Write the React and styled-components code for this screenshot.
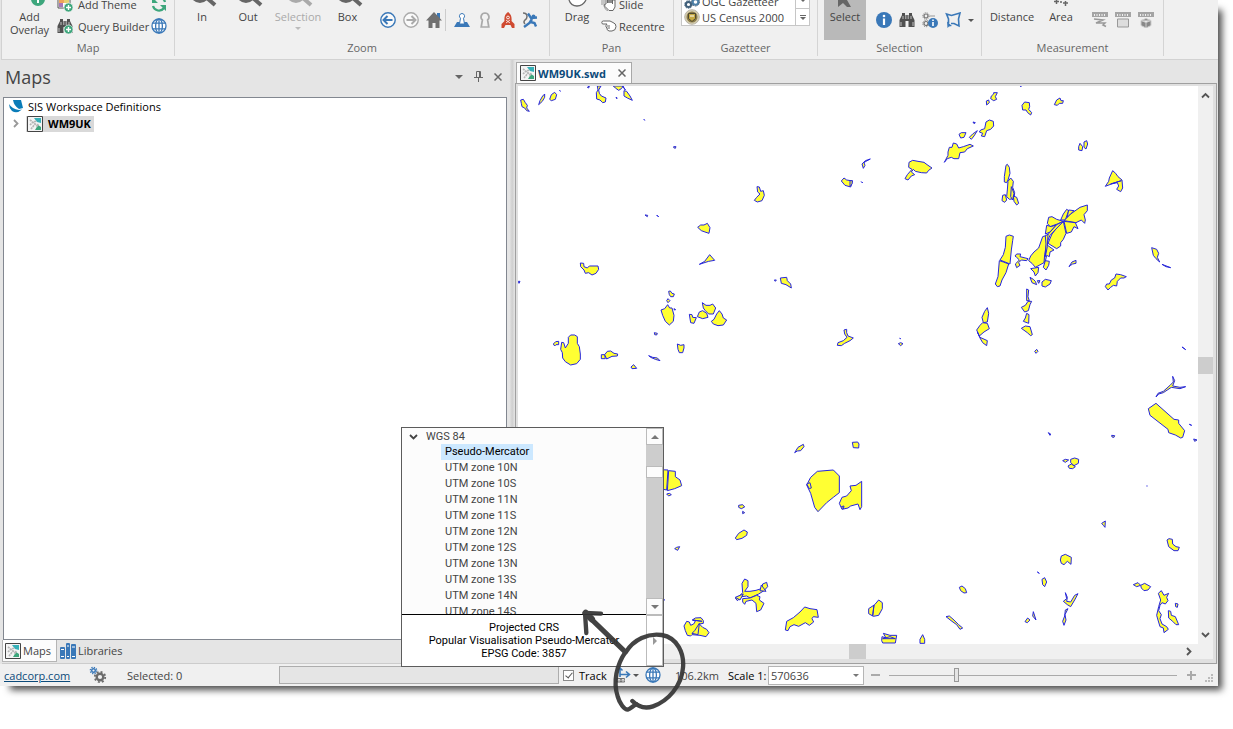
import React, { useState } from "react";
import styled, { createGlobalStyle } from "styled-components";

const crsZones = ["10N", "10S", "11N", "11S", "12N", "12S", "13N", "13S", "14N", "14S"];

// Boundary outlines, grouped by map sheet. Coordinates are in thirds of a unit.
const sheets = [
  {
    x: 510,
    y: 80,
    shapes: [
      "32,60 40,58 46,68 52,76 50,84 58,94 50,92 44,84 36,80 34,70",
      "104,42 104,52 97,64 86,74 90,62 98,48",
      "134,37 140,44 136,58 124,62 119,58 124,44",
      "149,31 151,34",
      "232,22 238,18 236,24",
      "262,18 273,18 266,30 268,40 274,48 288,54 286,66 278,68 270,60 260,57 259,38 264,30",
      "310,18 340,18 334,26 326,31 316,24",
      "342,32 350,34 360,48 367,61 352,54 342,48",
      "338,18 346,30",
      "318,52 322,54 320,56",
      "402,118 404,121",
      "491,200 498,200 496,205 491,203",
      "741,320 748,321 752,334 760,332 763,346 756,362 742,366 733,361 740,352 750,342 743,336",
      "994,303 1002,294 1010,300 1028,303 1022,321 1005,316",
      "405,405 413,406 412,410",
      "440,405 446,411",
      "563,442 572,435 582,435 592,430 600,443 597,460 585,456 574,452",
      "568,553 584,544 599,524 614,541 596,544",
      "211,549 221,550 222,560 232,564 238,558 264,558 266,568 258,580 246,585 236,578 226,580 222,570 212,560",
      "25,604 30,604 27,610",
      "793,600 799,600 796,604",
      "811,594 830,592 832,602 842,612 844,624 828,614 814,610",
      "476,634 481,633 486,640 493,642 490,650 482,650 478,644",
      "470,662 474,656 480,662 474,668",
      "473,674 479,684 486,684 492,706 490,724 478,735 466,724 458,706 453,690 464,686",
      "492,686 497,689 493,690",
      "538,703 546,704 548,712 559,713 552,730 542,728",
      "562,710 568,696 578,692 590,700 594,712 578,716",
      "577,668 588,676 600,676 608,672 617,684 610,702 596,702 586,692 580,684",
      "628,692 636,702 640,714 650,720 640,735 624,737 610,732 604,724 612,718 620,702",
      "433,758 442,760 440,765 434,764",
      "130,792 137,785 146,784 146,794 138,794 134,798",
      "175,772 182,765 194,765 202,770 202,790 208,800 211,822 211,838 200,851 182,855 166,845 158,834 157,818 152,808 155,787 161,788 166,804 175,790",
      "274,824 284,824 286,836 274,836",
      "284,824 292,814 302,813 312,820 323,822 322,828 306,829 290,837",
      "416,827 428,832 442,834 450,842 436,838 422,832",
      "502,792 512,796 522,794 522,804 518,818 508,818 504,808",
      "363,861 371,854 380,865 366,866",
      "1002,750 1010,748 1010,758 1014,768 1030,774 1020,782 1004,790 994,797 982,796 984,788 1000,782 1011,772 1004,762",
    ],
  },
  {
    x: 850,
    y: 80,
    shapes: [
      "510,18 514,19",
      "409,63 416,60 418,68 410,75",
      "424,48 431,42 431,38 442,38 436,50 440,58 431,62 422,56",
      "516,76 524,66 538,68 539,80 536,88 545,98 542,105 533,98 528,90 518,90",
      "613,74 620,60 630,54 633,62 640,62 638,70 628,70 622,76",
      "369,126 376,128 372,131",
      "327,163 334,158 348,158 342,172 332,174",
      "358,172 368,162 382,152 372,168 364,178",
      "408,126 418,120 430,124 431,138 422,148 410,152 404,170 394,168 398,160 388,156 392,150 404,146",
      "298,202 306,202 310,189 320,192 326,204 340,200 360,193 370,198 352,206 344,216 330,218 326,236 312,236 304,232 292,236 283,247 294,226 294,216",
      "177,247 188,241 204,244 222,247 234,256 246,264 236,271 230,279 214,278 196,274 190,268 184,276 194,284 184,288 174,300 165,296 172,284 186,268 176,262",
      "61,237 48,244 42,248 45,256 40,265 36,252 46,242",
      "34,305 38,309",
      "0,302 7,302 6,312 0,320",
      "686,200 690,190 698,200 696,212 686,210",
      "702,186 710,182 713,192 708,207 702,202",
      "468,256 472,253 478,262 480,280 474,300 470,308 463,306 463,290",
      "474,304 482,294 490,304 488,322 494,338 492,356 478,358 470,350 472,330",
      "484,320 492,340 488,360 482,350",
      "458,346 466,344 470,360 464,367 456,362",
      "490,348 500,352 506,370 500,375 492,364",
      "788,272 797,280 804,290 816,300 818,324 812,335 800,328 806,318 802,308 784,312 766,319 776,304 778,294",
      "782,312 814,302",
      "650,388 656,392 646,420 632,420 640,402",
      "656,390 672,392 656,408 650,420",
      "712,375 712,392 702,404 706,420 704,430 694,420 678,428 642,422 662,402 690,382",
      "642,424 676,428 684,446 672,440 664,456 650,460",
      "596,412 606,410 620,418 640,424 622,432 600,440 592,430",
      "640,424 648,460 640,478 632,488 632,498 620,506 594,490 606,462 620,444",
      "590,436 604,440 620,434 600,456 586,462",
      "620,434 640,424 600,466 590,490 588,470",
      "590,494 612,510 600,516 598,530 590,526 586,544 580,548",
      "578,470 590,466 590,490 584,524 582,548 556,562 546,550 536,542 542,528 552,516 566,504",
      "586,468 594,462 592,500 586,530 588,492",
      "586,542 598,544 596,556 588,570 580,562",
      "542,566 566,562 564,578 556,588 552,576",
      "495,528 500,522 512,522 510,530 534,536 530,542 514,540 506,548 510,556 500,563 496,552 508,540 500,532",
      "468,469 478,465 490,469 488,482 484,510 480,552 450,540 460,524 466,502",
      "448,542 460,546 476,552 468,578 456,600 450,618 442,620 436,612 444,590",
      "657,560 666,546 678,541 678,550 668,552 662,556",
      "905,503 920,508 926,520 922,532 929,546 918,536 910,526",
      "936,553 948,560 962,563",
      "766,620 770,612 778,612 784,600 794,594 798,582 812,584 829,590 822,594 812,594 802,604 800,618 790,616 782,622 774,630",
      "540,592 550,598 556,604 560,614 546,608",
      "562,602 570,602 566,610",
      "576,606 586,598 604,602 600,612 586,621 576,618",
      "530,627 536,630 534,650 538,662 530,662",
      "534,664 545,664 540,674 535,692 524,696 514,682 526,676",
      "530,700 537,704 536,730 520,724 526,714",
      "514,745 526,738 540,740 547,764 542,767 532,758",
      "412,683 416,700 412,726 400,728 396,712 404,694",
      "398,728 412,730 418,746 402,756 388,768 380,750 390,736",
      "382,756 390,772 412,782 410,797 398,788 390,774",
      "149,775 152,776",
      "145,791 152,788 159,791 152,797",
      "554,814 560,808 564,814 558,820",
      "996,801 1002,805 1007,809",
    ],
  },
  {
    x: 660,
    y: 370,
    shapes: [
      "404,248 414,232 430,223 432,230 422,242 412,243",
      "577,217 593,216 597,222 596,234 580,233",
      "0,299 24,300 20,360 0,356",
      "26,302 46,304 46,320 60,330 65,347 44,356 22,362",
      "20,372 28,370 34,374 26,378",
      "472,304 520,300 538,318 538,368 520,382 500,398 474,425 464,412 452,370 440,345 452,322",
      "440,342 450,338 454,354 448,356",
      "605,334 605,410 600,419 594,402 572,408 564,414 546,418 538,400 546,382 560,378 574,362 570,348 588,346",
      "544,410 552,408 550,417",
      "236,406 248,404 254,411 244,416 236,412",
      "248,424 254,428 248,431",
      "226,504 236,490 252,480 262,486 260,496 246,505 230,509",
      "44,536 50,532 59,530 53,541",
      "246,640 254,627 264,632 264,650 254,664 270,664 288,661 304,656 308,642 320,637 323,650 312,662 296,672 270,684 260,678 246,680 232,692 226,684 238,678 248,668",
      "248,686 270,684 290,676 300,680 298,690 312,700 302,720 290,725 288,700 276,690 258,694 254,703 248,696",
      "226,682 240,690 250,672",
      "304,645 318,664 300,662",
      "376,780 380,754 400,743 420,726 434,711 450,716 471,719 475,742 460,740 456,746 461,756 448,766 436,758 416,769 402,764 390,770 384,782",
      "72,768 80,754 88,756 92,766 101,762 106,754 97,750 106,744 123,743 130,752 130,760 118,762 128,772 140,778 147,788 138,800 120,796 96,794 92,798 82,796 76,782",
      "118,760 114,794 96,790 104,782",
      "98,750 126,754",
      "626,716 644,704 656,690 667,698 667,716 656,736 640,739 626,731",
      "642,705 638,738",
      "665,812 666,800 678,804 670,790 690,796 710,796 708,808 706,819 668,819",
      "668,806 690,800 706,806",
      "788,794 794,808 794,820 780,820 780,808",
      "11,688 14,690",
    ],
  },
  {
    x: 950,
    y: 360,
    shapes: [
      "668,49 674,62 668,78 690,82 707,80 690,86 664,82 640,98 626,102 618,111 624,100 640,94 660,76 670,66",
      "595,146 618,130 672,178 686,180 686,190 704,212 698,232 692,234 676,225 656,218 654,208 600,166",
      "718,193 725,196",
      "731,237 741,240 734,244",
      "295,218 302,222 300,226",
      "485,226 494,227 492,232 486,231",
      "338,302 346,298 356,300 346,307",
      "362,298 374,294 386,298 385,310 372,317 362,308",
      "354,318 364,312 376,320 368,326 358,325",
      "590,378 592,378",
      "455,490 466,483 465,502 460,496",
      "651,540 657,536 667,538 668,552 678,560 688,562 684,572 672,572 656,560",
      "331,600 334,588 346,583 364,592 363,613 352,604 342,614 334,610",
      "262,636 268,640",
      "276,658 284,653 290,666 284,680 278,674",
      "28,682 36,678 46,686 50,698 42,699 32,692",
      "550,674 564,668 572,676 560,680",
      "572,676 584,670 602,680 594,690 582,692 574,684",
      "340,724 350,716 346,698 352,712 350,724 362,726 374,706 384,701 374,720 362,740 352,734",
      "354,746 345,764 348,780 342,796 338,784 344,768 346,750",
      "625,700 634,692 642,706 656,700 650,712 654,722 646,732 636,728 630,736 626,752 634,764 630,776 636,792 650,800 655,808 642,818 640,804 630,800 624,780 620,766 626,740 632,720",
      "676,730 684,732 682,742 677,740",
      "655,752 662,754 664,766 676,770 686,794 678,794 668,784 656,774",
      "225,785 233,774 240,780 232,788",
      "250,755 258,780 248,768",
      "-12,770 -2,768 12,780 26,794 38,804 30,808 20,794 6,784",
    ],
  },
];

const MagnifierTip = ({ color }) => (
  <svg width="30" height="7" viewBox="0 0 30 7" fill="none" stroke={color}>
    <path d="M6 -2Q13 5 20 -2" strokeWidth="3" />
    <path d="M20 -2L28 5" strokeWidth="4" />
  </svg>
);

const Globe = () => (
  <svg width="16" height="16" viewBox="0 0 16 16" fill="none" stroke="#3a78b8" strokeWidth="1.3">
    <circle cx="8" cy="8" r="7" fill="#fff" />
    <ellipse cx="8" cy="8" rx="3.4" ry="7" />
    <path d="M8 1v14M1.5 5.2h13M1.5 10.8h13" />
  </svg>
);

const AddBadge = () => (
  <>
    <circle cx="11.5" cy="11.5" r="4.5" fill="#3da67c" stroke="#f0f0f0" strokeWidth=".7" />
    <path d="M11.5 9v5M9 11.5h5" stroke="#fff" strokeWidth="1.4" />
  </>
);

const ThemeIcon = () => (
  <svg width="16" height="16" viewBox="0 0 16 16">
    <path d="M1 0h12v12H1z" fill="#fff" stroke="#555" />
    <path d="M2 3h5v4H2z" fill="#f0a25c" />
    <path d="M2 7h4v4H2z" fill="#a678b8" />
    <path d="M7 3h5v4H7z" fill="#e7cf70" />
    <AddBadge />
  </svg>
);

const Binoculars = ({ children }) => (
  <svg width="16" height="16" viewBox="0 0 16 16">
    <path d="M3 1h3v2h4V1h3v2l2.500 5v7H9.500V9h-3v6H.5V8L3 3z" fill="#505050" />
    <path d="M2 10v4M14 10v4M6.800 3v4M9.200 3v4M4 4v3M12 4v3" stroke="#ddd" strokeWidth=".8" />
    {children}
  </svg>
);

const RefreshIcon = () => (
  <svg width="16" height="16" viewBox="0 0 16 16" fill="none" stroke="#3da67c" strokeWidth="2.2">
    <path d="M14 6A6.200 6.200 0 0 0 3 4M2 10a6.200 6.200 0 0 0 11 2" />
    <path d="M1 1v6h6zM15 15V9H9z" fill="#3da67c" stroke="none" />
  </svg>
);

const ArrowCircle = ({ color, flip }) => (
  <svg width="16" height="16" viewBox="0 0 16 16" fill="none" stroke={color} strokeWidth="1.4">
    <circle cx="8" cy="8" r="7.200" fill="#fafafa" />
    <path
      d={flip ? "M3.500 8h9M8.500 4l4 4-4 4" : "M12.500 8h-9M7.500 4l-4 4 4 4"}
      strokeWidth="2"
    />
  </svg>
);

const HomeIcon = () => (
  <svg width="16" height="16" viewBox="0 0 16 16">
    <path d="M11 1h3v6h-3z" fill="#3a78b8" />
    <path d="M8 0L0 8.500h2.500V16h4v-5h3v5h4V8.500H16z" fill="#707070" />
  </svg>
);

const StampIcon = () => (
  <svg width="16" height="16" viewBox="0 0 16 16">
    <path d="M3 10h10l3 5H0z" fill="#3a78b8" />
    <path d="M8 1.500a2.600 2.600 0 0 1 1.500 4.700L10.500 12h-5l1-5.800A2.600 2.600 0 0 1 8 1.500z" fill="#fff" stroke="#3a78b8" />
  </svg>
);

const PawnIcon = () => (
  <svg width="16" height="16" viewBox="0 0 16 16">
    <path
      d="M8 1a4 4 0 0 1 2.600 7L11.800 15H4.200L5.400 8A4 4 0 0 1 8 1z"
      fill="#f2f2f2"
      stroke="#aaa"
      strokeWidth="1.700"
    />
  </svg>
);

const RocketIcon = () => (
  <svg width="16" height="16" viewBox="0 0 16 16">
    <path d="M8 0c3 2 4 5 3.500 9l3 3v4h-2.500L10.500 13h-5L4 16H1.500v-4l3-3C4 5 5 2 8 0z" fill="#cf4a31" />
    <circle cx="8" cy="5.500" r="1.400" fill="#cf4a31" stroke="#fff" strokeWidth=".9" />
    <path d="M6 8l4 3M10 8l-4 3" stroke="#fff" strokeWidth=".8" />
  </svg>
);

const JumperIcon = () => (
  <svg width="17" height="16" viewBox="0 0 17 16">
    <path d="M1 1q4 0 4 3.500Q5 7 3 8q-2 2 0 4" fill="none" stroke="#707070" strokeWidth="1.500" />
    <circle cx="11.500" cy="4.500" r="2" fill="#3a78b8" />
    <path d="M6 1.500L9 6l6-.5M10 7L7.500 11 2 15M8.500 10l4 1 1.500 3.500" fill="none" stroke="#3a78b8" strokeWidth="2.400" />
  </svg>
);

const HandIcon = ({ ghost }) => (
  <svg width="16" height="14" viewBox="0 0 16 14" fill="#fff" stroke="#666">
    {ghost && <path d="M1 1v7M3 0v9q1 4 4 5" fill="none" stroke="#999" />}
    <path d="M5 7V2h1.500v4V0H8v6V0h2v6V1h1.500v6V3H14v7l-2 3.500H8L4 9.500 3.500 7.500z" />
  </svg>
);

const PointIcon = () => (
  <svg width="16" height="14" viewBox="0 0 16 14" fill="#fff" stroke="#666">
    <path d="M.8 3.500q0-1.500 1.500-1.500H9l3 1.500q3 1 3 4 0 4-4 4.500H8L6 10.500V9L5 8V6.500L6 5H2Q.8 5 .8 3.500zM6 7h3M6.500 9h2.500" />
  </svg>
);

const CogsIcon = () => (
  <svg width="16" height="16" viewBox="0 0 16 16" fill="none">
    <circle cx="4.500" cy="11.500" r="2.600" stroke="#41607a" strokeWidth="2" />
    <circle cx="4.500" cy="11.500" r="3.800" stroke="#41607a" strokeDasharray="1.500 1" />
    <circle cx="11.500" cy="9" r="2.800" stroke="#4d80a8" strokeWidth="2" />
    <circle cx="11.500" cy="9" r="4" stroke="#41607a" strokeDasharray="1.500 1" />
  </svg>
);

const SealIcon = () => (
  <svg width="16" height="16" viewBox="0 0 16 16">
    <circle cx="8" cy="8" r="7.300" fill="#d6ceb0" stroke="#b8b4a8" />
    <circle cx="8" cy="8" r="5.500" fill="#8a7a48" />
    <path d="M4.500 4.500h7v5L8 12.500l-3.500-3z" fill="#c6a942" stroke="#4e4930" />
    <path d="M6 7h4" stroke="#fff" />
  </svg>
);

const InfoIcon = () => (
  <svg width="16" height="16" viewBox="0 0 16 16">
    <circle cx="8" cy="8" r="8" fill="#3a78b8" />
    <circle cx="8" cy="4" r="1.300" fill="#fff" />
    <path d="M8 6.500V13" stroke="#fff" strokeWidth="2.200" />
  </svg>
);

const CogInfoIcon = () => (
  <svg width="16" height="16" viewBox="0 0 16 16" fill="none">
    <circle cx="4" cy="4" r="2" stroke="#707070" strokeWidth="1.200" />
    <circle cx="4" cy="4" r="3.200" stroke="#707070" strokeDasharray="1 1" />
    <circle cx="4" cy="11.500" r="2" stroke="#707070" strokeWidth="1.200" />
    <circle cx="4" cy="11.500" r="3.200" stroke="#707070" strokeDasharray="1 1" />
    <path d="M8 4h5" stroke="#999" />
    <circle cx="11" cy="11" r="5" fill="#3a78b8" />
    <path d="M11 7.500v1.500M11 10v4" stroke="#fff" strokeWidth="1.600" />
  </svg>
);

const PolygonIcon = () => (
  <svg width="16" height="16" viewBox="0 0 16 16" fill="none" stroke="#3a78b8" strokeWidth="1.600">
    <path d="M3.500 11V7L1.500 2l5 1.500L15 1l-1.500 6L14 14l-5-2.500H6" />
    <path d="M2 9.500l5 4.500-3 .5-1.500 1.500z" fill="#3a78b8" stroke="none" />
  </svg>
);

const RulerIcon = ({ kind }) => (
  <svg width="16" height="16" viewBox="0 0 16 16" fill="none" stroke="#999">
    <path d="M0 0h16v5H0z" fill="#a4a4a4" stroke="none" />
    <path d="M2.500 2v2M5 2v2M7.500 2v2M10 2v2M12.500 2v2" stroke="#f0f0f0" />
    {kind === "line" && <path d="M2 7l9 1-7 3h9l-2 2 3 1.500" strokeWidth="1.500" />}
    {kind === "box" && <path d="M2.500 7h11v8h-11z" fill="#ddd" />}
    {kind === "cube" && (
      <path d="M8 6.500l5 2v5l-5 2.500-5-2.500v-5zM3 8.500l5 2 5-2M8 10.500V16" fill="#888" stroke="#ccc" />
    )}
  </svg>
);

const MapIcon = () => (
  <svg width="16" height="16" viewBox="0 0 16 16">
    <path d="M.5.5h15v15H.5z" fill="#f4f4f4" stroke="#444" />
    <path d="M7 2h7v5l-4-1z" fill="#35b0b8" />
    <path d="M11 9l3 2v3H8z" fill="#3da67c" />
    <path d="M3 4l4 3 4 4M3 9l3-3 4-1M4 13l4-5 4 1" fill="none" stroke="#b5b5b5" strokeWidth="1.600" strokeDasharray="2 .7" />
  </svg>
);

const LibraryIcon = () => (
  <svg width="16" height="16" viewBox="0 0 16 16" fill="#3a78b8">
    <rect y="4" width="5" height="12" rx="1" />
    <rect x="6" y="0" width="4" height="16" rx="1" />
    <rect x="11" y="1" width="5" height="15" rx="1" />
    <path d="M1 6.500h3M1 13.500h3M7 3h2M7 13.500h2M12 4h3M12 13.500h3" stroke="#fff" />
  </svg>
);

const LogoIcon = () => (
  <svg width="16" height="16" viewBox="0 0 16 16" fill="#0a7cb8">
    <path d="M5 1h8q1 4 2 8l-4 1Q6 7 5 1z" />
    <path d="M1 5q3 5 10 6l3-.5Q9 15 4 12 1 9 1 5z" />
  </svg>
);

const GearsIcon = () => (
  <svg width="18" height="18" viewBox="0 0 18 18" fill="none">
    <circle cx="4.500" cy="4.500" r="1.800" stroke="#3a78b8" strokeWidth="1.400" />
    <circle cx="4.500" cy="4.500" r="3.200" stroke="#3a78b8" strokeWidth="1.300" strokeDasharray="1.300 1.200" />
    <circle cx="11" cy="11" r="3.300" stroke="#6c6c6c" strokeWidth="2.400" />
    <circle cx="11" cy="11" r="5.200" stroke="#6c6c6c" strokeWidth="1.800" strokeDasharray="2 2.080" />
  </svg>
);

const AxisIcon = () => (
  <svg width="16" height="16" viewBox="0 0 16 16" fill="none">
    <path d="M5 10V1M2.500 3.500L5 1l2.500 2.500M5 7.500h9M11 4.500l3.500 3-3.500 3" stroke="#3a78b8" strokeWidth="1.600" />
    <rect x="1" y="11" width="9" height="4.500" rx="1" fill="#707070" />
    <path d="M3 12.500h2v1.500H3zM7 12.500h2v1.500H7z" stroke="#eee" strokeWidth=".8" />
  </svg>
);

const Chevron = ({ dir = "down", color = "#555" }) => {
  const paths = {
    down: "M1 3l3.500 3.500L8 3",
    up: "M1 6.500L4.500 3 8 6.500",
    right: "M3 1l3.500 3.500L3 8",
  };
  return (
    <svg width="9" height="9" viewBox="0 0 9 9" fill="none">
      <path d={paths[dir]} stroke={color} strokeWidth="1.800" />
    </svg>
  );
};

const CloseX = () => (
  <svg width="8" height="8" viewBox="0 0 8 8">
    <path d="M.5.5l7 7M7.500.5l-7 7" stroke="#666" strokeWidth="1.500" />
  </svg>
);

const MapView = () => (
  <MapArea>
    <svg width="100%" height="100%" viewBox="518 86 680 558" preserveAspectRatio="xMinYMin slice">
      {sheets.map((sheet) => (
        <g key={`${sheet.x}-${sheet.y}`} transform={`translate(${sheet.x} ${sheet.y}) scale(0.33333)`}>
          {sheet.shapes.map((points) => (
            <polygon
              key={points}
              points={points}
              fill="#ffff33"
              stroke="#2424e0"
              strokeWidth="3"
              strokeLinejoin="round"
            />
          ))}
        </g>
      ))}
    </svg>
  </MapArea>
);

const App = () => {
  const [scale, setScale] = useState("570636");
  const [zoom, setZoom] = useState(23);
  const [track, setTrack] = useState(true);

  return (
    <>
      <GlobalStyle />
      <Window>
        {/* Ribbon */}
        <Ribbon>
          <Group $width={173}>
            <GroupBody>
              <BigButton $width={55}>
                <IconClip>
                  <svg width="32" height="7" viewBox="0 0 32 7">
                    <circle cx="24" cy="-1" r="7" fill="#3da67c" />
                    <path d="M24 -4v7" stroke="#fff" strokeWidth="2" />
                  </svg>
                </IconClip>
                <span>Add</span>
                <span>Overlay</span>
              </BigButton>
              <Stack $width={94}>
                <SmallButton><ThemeIcon />Add Theme</SmallButton>
                <SmallButton>
                  <Binoculars><AddBadge /></Binoculars>
                  Query Builder
                </SmallButton>
              </Stack>
              <Stack $width={20}>
                <SmallButton aria-label="Refresh"><RefreshIcon /></SmallButton>
                <SmallButton aria-label="Projection"><Globe /></SmallButton>
              </Stack>
            </GroupBody>
            <GroupLabel>Map</GroupLabel>
          </Group>

          <Group $width={375}>
            <GroupBody $start={4}>
              <BigButton $width={46}><IconClip><MagnifierTip color="#666" /></IconClip>In</BigButton>
              <BigButton $width={46}><IconClip><MagnifierTip color="#666" /></IconClip>Out</BigButton>
              <BigButton $width={54} disabled>
                <IconClip><MagnifierTip color="#aaa" /></IconClip>
                Selection
                <Caret $color="#bbb" />
              </BigButton>
              <BigButton $width={45}><IconClip><MagnifierTip color="#666" /></IconClip>Box</BigButton>
              <IconRow>
                <IconButton aria-label="Previous view"><ArrowCircle color="#3a78b8" /></IconButton>
                <IconButton aria-label="Next view"><ArrowCircle color="#aaa" flip /></IconButton>
                <IconButton aria-label="Home"><HomeIcon /></IconButton>
                <Divider />
                <IconButton aria-label="Save view"><StampIcon /></IconButton>
                <IconButton aria-label="Recall view"><PawnIcon /></IconButton>
                <IconButton aria-label="Launch view"><RocketIcon /></IconButton>
                <IconButton aria-label="Bungee zoom"><JumperIcon /></IconButton>
              </IconRow>
            </GroupBody>
            <GroupLabel>Zoom</GroupLabel>
          </Group>

          <Group $width={124}>
            <GroupBody $start={3}>
              <BigButton $width={48}>
                <IconClip>
                  <svg width="22" height="7" viewBox="0 0 22 7">
                    <path d="M3 0q2 6 8 6t9-6" fill="#fff" stroke="#666" strokeWidth="1.300" />
                  </svg>
                </IconClip>
                Drag
              </BigButton>
              <Stack $width={70}>
                <SmallButton $tight><HandIcon ghost />Slide</SmallButton>
                <SmallButton $tight><PointIcon />Recentre</SmallButton>
              </Stack>
            </GroupBody>
            <GroupLabel>Pan</GroupLabel>
          </Group>

          <Group $width={144}>
            <GroupBody $start={7}>
              <Gallery>
                <GalleryList>
                  <GalleryItem><CogsIcon />OGC Gazetteer</GalleryItem>
                  <GalleryItem><SealIcon />US Census 2000</GalleryItem>
                </GalleryList>
                <GalleryButtons>
                  <button aria-label="Scroll gallery"><Caret $color="#666" /></button>
                  <button aria-label="Open gallery"><Bar /><Caret $color="#666" /></button>
                </GalleryButtons>
              </Gallery>
            </GroupBody>
            <GroupLabel>Gazetteer</GroupLabel>
          </Group>

          <Group $width={164}>
            <GroupBody $start={6}>
              <BigButton $width={42} $active>
                <IconClip>
                  <svg width="18" height="7" viewBox="0 0 18 7">
                    <path d="M2 0v7l5-4 4 4h4L11 0z" fill="#666" />
                  </svg>
                </IconClip>
                Select
              </BigButton>
              <IconRow>
                <IconButton aria-label="Info"><InfoIcon /></IconButton>
                <IconButton aria-label="Find"><Binoculars /></IconButton>
                <IconButton aria-label="Properties"><CogInfoIcon /></IconButton>
                <IconButton aria-label="Select by polygon"><PolygonIcon /></IconButton>
                <CaretButton aria-label="More selection tools"><Caret $color="#555" /></CaretButton>
              </IconRow>
            </GroupBody>
            <GroupLabel>Selection</GroupLabel>
          </Group>

          <Group $width={182}>
            <GroupBody $start={2}>
              <BigButton $width={56}><IconClip />Distance</BigButton>
              <BigButton $width={42}>
                <IconClip>
                  <svg width="18" height="7" viewBox="0 0 18 7">
                    <path d="M2 1.500h5M4.500 0v4M11 3h5M13.500 1v5M8 2h2" stroke="#666" strokeWidth="1.500" />
                  </svg>
                </IconClip>
                Area
              </BigButton>
              <IconRow>
                <IconButton aria-label="Measure line"><RulerIcon kind="line" /></IconButton>
                <IconButton aria-label="Measure area"><RulerIcon kind="box" /></IconButton>
                <IconButton aria-label="Measure volume"><RulerIcon kind="cube" /></IconButton>
              </IconRow>
            </GroupBody>
            <GroupLabel>Measurement</GroupLabel>
          </Group>
        </Ribbon>

        <Main>
          {/* Maps pane */}
          <Pane>
            <PaneHeader>
              <h2>Maps</h2>
              <PaneTools>
                <button aria-label="Pane menu"><Caret $color="#666" $big /></button>
                <button aria-label="Pin pane">
                  <svg width="9" height="11" viewBox="0 0 9 11" fill="none" stroke="#666">
                    <path d="M2.500 6V.5h4V6M0 6.500h9M4.500 7v4M5.500 1v5" />
                  </svg>
                </button>
                <button aria-label="Close pane"><CloseX /></button>
              </PaneTools>
            </PaneHeader>
            <Tree>
              <TreeRow><LogoIcon />SIS Workspace Definitions</TreeRow>
              <TreeRow $child>
                <Chevron dir="right" color="#999" />
                <TreeLabel><MapIcon />WM9UK</TreeLabel>
              </TreeRow>
            </Tree>
            <PaneTabs>
              <PaneTab $active><MapIcon />Maps</PaneTab>
              <PaneTab><LibraryIcon />Libraries</PaneTab>
            </PaneTabs>
          </Pane>

          <Splitter />

          {/* Document */}
          <Document>
            <DocTabs>
              <DocTab>
                <MapIcon />
                WM9UK.swd
                <CloseX />
              </DocTab>
            </DocTabs>
            <DocFrame>
              <MapView />
              <VScroll>
                <Chevron dir="up" />
                <Thumb $vertical />
                <Chevron dir="down" />
              </VScroll>
              <HScroll>
                <Thumb />
                <Chevron dir="right" />
              </HScroll>
            </DocFrame>
          </Document>
        </Main>

        {/* Status bar */}
        <StatusBar>
          <SiteLink href="#">cadcorp.com</SiteLink>
          <GearButton aria-label="Settings"><GearsIcon /></GearButton>
          <Selected>Selected: 0</Selected>
          <Progress role="progressbar" aria-label="Progress" />
          <TrackLabel>
            <input type="checkbox" checked={track} onChange={(e) => setTrack(e.target.checked)} />
            Track
          </TrackLabel>
          <AxisButton aria-label="Axis display"><AxisIcon /><Caret $color="#555" /></AxisButton>
          <CrsAnchor>
            <CrsButton aria-label="Coordinate reference system"><Globe /></CrsButton>
            <Popup>
              <CrsList>
                <CrsGroup><Chevron dir="down" color="#444" />WGS 84</CrsGroup>
                <CrsItem><CrsName $selected>Pseudo-Mercator</CrsName></CrsItem>
                {crsZones.map((zone) => (
                  <CrsItem key={zone}><CrsName>UTM zone {zone}</CrsName></CrsItem>
                ))}
              </CrsList>
              <PopupScroll>
                <button aria-label="Scroll up"><Caret $color="#777" $big $up /></button>
                <PopupThumb />
                <button aria-label="Scroll down"><Caret $color="#777" $big /></button>
              </PopupScroll>
              <CrsInfo>
                <p>Projected CRS</p>
                <p>Popular Visualisation Pseudo-Mercator</p>
                <p>EPSG Code: 3857</p>
              </CrsInfo>
              <MoreButton aria-label="More">
                <svg width="4" height="8" viewBox="0 0 4 8"><path d="M0 0l4 4-4 4z" fill="#999" /></svg>
              </MoreButton>
            </Popup>
            <Annotation width="120" height="110" viewBox="540 570 360 330">
              <g fill="none" stroke="#383838" strokeLinecap="round" strokeLinejoin="round" opacity=".94">
                <path d="M574 586L690 698" strokeWidth="15" />
                <path d="M574 642L570 582L618 584" strokeWidth="13" />
                <path d="M572 582L590 600" strokeWidth="20" />
                <path
                  d="M692 700C716 660 760 642 800 648C848 656 868 704 864 746C860 800 820 846 774 862C750 870 728 862 712 846"
                  strokeWidth="13"
                />
                <path d="M692 698C664 738 654 790 668 832C674 854 688 872 698 872C706 870 712 862 724 856" strokeWidth="13" />
              </g>
            </Annotation>
          </CrsAnchor>
          <Distance>106.2km</Distance>
          <ScaleLabel htmlFor="scale">Scale 1:</ScaleLabel>
          <SelectBox>
            <select id="scale" value={scale} onChange={(e) => setScale(e.target.value)}>
              <option>570636</option>
              <option>1000000</option>
            </select>
            <Caret $color="#777" />
          </SelectBox>
          <ZoomButton aria-label="Zoom out"><Sign /></ZoomButton>
          <Slider
            type="range"
            aria-label="Zoom"
            value={zoom}
            onChange={(e) => setZoom(Number(e.target.value))}
          />
          <ZoomButton aria-label="Zoom in"><Sign $plus /></ZoomButton>
          <Grip width="9" height="9" viewBox="0 0 9 9">
            <path d="M6 0h2v2H6zM3 3h2v2H3zM6 3h2v2H6zM0 6h2v2H0zM3 6h2v2H3zM6 6h2v2H6z" fill="#bbb" />
          </Grip>
        </StatusBar>
      </Window>
    </>
  );
};

export default App;

const GlobalStyle = createGlobalStyle`
  * {
    box-sizing: border-box;
  }

  body {
    margin: 0;
    min-height: 100vh;
    background: #fff;
  }

  button, select, input {
    font: inherit;
    color: inherit;
  }

  button {
    padding: 0;
    border: none;
    background: none;
  }

  svg {
    display: block;
    flex-shrink: 0;
  }
`;

const Window = styled.div`
  margin-right: 15px;
  height: calc(100vh - 43px);
  display: flex;
  flex-direction: column;
  background: #e5e5e5;
  color: #444;
  font-family: "Open Sans", "Noto Sans", sans-serif;
  font-size: 11px;
  line-height: 13px;
  white-space: nowrap;
  box-shadow: 7px 7px 7px -3px rgba(0, 0, 0, 0.7);
`;

/* Ribbon */
const Ribbon = styled.header`
  display: flex;
  height: 60px;
  flex-shrink: 0;
  margin-left: 1px;
  background: #f0f0f0;
  border-left: 1px solid #d2d2d2;
  border-bottom: 1px solid #d2d2d2;
`;

const Group = styled.section`
  width: ${(p) => p.$width}px;
  height: 56px;
  border-right: 1px solid #d4d4d4;
  overflow: hidden;
`;

const GroupBody = styled.div`
  display: flex;
  height: 40px;
  padding-left: ${(p) => p.$start || 0}px;
`;

const GroupLabel = styled.div`
  text-align: center;
  line-height: 15px;
  color: #666;
`;

const BigButton = styled.button`
  display: flex;
  flex-direction: column;
  align-items: center;
  width: ${(p) => p.$width}px;
  height: 40px;
  background: ${(p) => (p.$active ? "#b9b9b9" : "transparent")};

  &:disabled {
    color: #aaa;
  }
`;

const IconClip = styled.span`
  height: 7px;
  margin-bottom: 3px;
  display: flex;
  align-items: flex-end;
  overflow: hidden;
`;

const Caret = styled.i`
  display: block;
  width: 0;
  border: ${(p) => (p.$big ? 4 : 3)}px solid transparent;
  border-top-color: ${(p) => (p.$up ? "transparent" : p.$color)};
  border-bottom-color: ${(p) => (p.$up ? p.$color : "transparent")};
  border-top-width: ${(p) => (p.$up ? 0 : p.$big ? 4 : 3)}px;
  border-bottom-width: ${(p) => (p.$up ? 4 : 0)}px;

  ${BigButton} & {
    margin-top: 4px;
  }
`;

const Stack = styled.div`
  width: ${(p) => p.$width}px;
  margin-top: -7px;
`;

const SmallButton = styled.button`
  display: flex;
  align-items: center;
  gap: ${(p) => (p.$tight ? 2 : 5)}px;
  height: 22px;
`;

const IconRow = styled.div`
  display: flex;
  align-items: center;
  height: 20px;
  margin: 10px 0 0 6px;
`;

const IconButton = styled.button`
  width: 23px;
  display: flex;
  justify-content: center;
`;

const CaretButton = styled.button`
  padding: 0 4px;
`;

const Divider = styled.div`
  width: 1px;
  height: 22px;
  margin-right: 4px;
  background: #ccc;
`;

const Gallery = styled.div`
  display: flex;
  width: 129px;
  height: 34px;
  margin-top: -8px;
  background: #fff;
  border: 1px solid #c6c6c6;
`;

const GalleryList = styled.div`
  flex: 1;
`;

const GalleryItem = styled.button`
  display: flex;
  align-items: center;
  gap: 2px;
  height: 16px;
  padding-left: 2px;
`;

const GalleryButtons = styled.div`
  width: 14px;
  border-left: 1px solid #c6c6c6;

  button {
    width: 100%;
    height: 16px;
    display: flex;
    flex-direction: column;
    align-items: center;
    justify-content: center;
    gap: 1px;
  }

  button:first-child {
    border-bottom: 1px solid #c6c6c6;
  }
`;

const Bar = styled.i`
  width: 6px;
  height: 1px;
  background: #666;
`;

/* Main area */
const Main = styled.main`
  flex: 1;
  min-height: 0;
  display: flex;
`;

const Pane = styled.aside`
  width: 508px;
  display: flex;
  flex-direction: column;
  padding-left: 3px;
`;

const PaneHeader = styled.div`
  display: flex;
  justify-content: space-between;
  align-items: center;
  height: 37px;
  padding: 0 6px 4px 2px;

  h2 {
    margin: 0;
    font-size: 18px;
    font-weight: 400;
    line-height: 24px;
  }
`;

const PaneTools = styled.div`
  display: flex;
  align-items: center;
  gap: 11px;
`;

const Tree = styled.div`
  flex: 1;
  margin-right: 1px;
  background: #fff;
  border: 1px solid #828790;
  color: #000;
`;

const TreeRow = styled.div`
  display: flex;
  align-items: center;
  gap: ${(p) => (p.$child ? 6 : 4)}px;
  height: 17px;
  padding-left: ${(p) => (p.$child ? 7 : 4)}px;
`;

const TreeLabel = styled.span`
  display: flex;
  align-items: center;
  gap: 5px;
  height: 16px;
  padding: 0 3px 0 1px;
  background: #d9d9d9;
  font-weight: 700;
`;

const PaneTabs = styled.div`
  display: flex;
  height: 24px;
  padding-bottom: 1px;
  margin-left: -1px;
  border-bottom: 1px solid #ccc;
`;

const PaneTab = styled.button`
  display: flex;
  align-items: center;
  gap: 2px;
  padding: 0 5px 0 2px;
  background: ${(p) => (p.$active ? "#fcfcfc" : "transparent")};
  border: 1px solid ${(p) => (p.$active ? "#b5b5b5" : "transparent")};
  border-top: none;
`;

const Splitter = styled.div`
  width: 7px;
  background: linear-gradient(90deg, #e5e5e5 20%, #cfcfcf 60%, #e5e5e5);
`;

const Document = styled.section`
  flex: 1;
  min-width: 0;
  display: flex;
  flex-direction: column;
`;

const DocTabs = styled.div`
  display: flex;
  align-items: flex-end;
  height: 23px;
  padding-left: 1px;
`;

const DocTab = styled.div`
  display: flex;
  align-items: center;
  gap: 2px;
  height: 21px;
  width: 116px;
  padding: 0 5px 0 3px;
  background: #fcfcfc;
  border: 1px solid #a8a8a8;
  border-bottom: none;
  color: #0b4a7a;
  font-weight: 700;

  svg:last-child {
    margin-left: auto;
  }
`;

const DocFrame = styled.div`
  flex: 1;
  min-height: 0;
  display: grid;
  grid-template: 1fr 15px / 1fr 15px;
  padding: 2px 3px 4px 2px;
  margin-right: 1px;
  background: #e0e0e0;
  border: 1px solid #a0a0a0;
`;

const MapArea = styled.div`
  min-width: 0;
  min-height: 0;
  background: #fff;
  overflow: hidden;
`;

const VScroll = styled.div`
  display: flex;
  flex-direction: column;
  align-items: center;
  justify-content: space-between;
  padding: 5px 0;
  background: #f0f0f0;
`;

const HScroll = styled.div`
  grid-column: 1 / -1;
  display: flex;
  align-items: center;
  justify-content: space-between;
  padding: 0 20px 0 331px;
  background: #f0f0f0;
`;

const Thumb = styled.div`
  width: ${(p) => (p.$vertical ? 15 : 17)}px;
  height: ${(p) => (p.$vertical ? 17 : 15)}px;
  background: #cdcdcd;
`;

/* Status bar */
const StatusBar = styled.footer`
  display: flex;
  align-items: center;
  height: 22px;
  flex-shrink: 0;
  padding: 0 4px;
  background: #f0f0f0;
`;

const SiteLink = styled.a`
  width: 85px;
  color: #0b4a7a;
`;

const GearButton = styled.button`
  width: 38px;
`;

const Selected = styled.span`
  width: 152px;
`;

const Progress = styled.div`
  width: 280px;
  height: 18px;
  background: #e5e5e5;
  border: 1px solid #adadad;
`;

const TrackLabel = styled.label`
  display: flex;
  align-items: center;
  gap: 5px;
  width: 56px;
  padding-left: 4px;
  color: #000;

  input {
    appearance: none;
    margin: 0;
    width: 11px;
    height: 11px;
    background: #fff;
    border: 1px solid #8a8a8a;
  }

  input:checked::after {
    content: "";
    display: block;
    width: 3px;
    height: 6px;
    margin: 0 0 0 3px;
    border: solid #555;
    border-width: 0 1px 1px 0;
    transform: rotate(40deg);
  }
`;

const AxisButton = styled.button`
  display: flex;
  align-items: center;
  gap: 2px;
  width: 30px;
`;

const CrsAnchor = styled.div`
  position: relative;
  width: 30px;
`;

const CrsButton = styled.button`
  display: block;
`;

const Popup = styled.div`
  position: absolute;
  right: 11px;
  bottom: 16px;
  width: 263px;
  height: 240px;
  display: grid;
  grid-template: 187px 1fr / 1fr 17px;
  background: #fff;
  border: 1px solid #5c5c5c;
  font-family: Roboto, "Liberation Sans", sans-serif;
`;

const CrsList = styled.div`
  overflow: hidden;
  background: #fcfcfc;
  border-bottom: 1px solid #000;
  color: #444;
`;

const CrsGroup = styled.div`
  display: flex;
  align-items: center;
  gap: 8px;
  height: 16px;
  padding-left: 7px;
`;

const CrsItem = styled.div`
  height: 16px;
  padding-left: 39px;
`;

const CrsName = styled.span`
  display: inline-block;
  padding: 0 4px;
  line-height: 16px;
  color: ${(p) => (p.$selected ? "#000" : "inherit")};
  background: ${(p) => (p.$selected ? "#cce8ff" : "transparent")};
`;

const PopupScroll = styled.div`
  display: flex;
  flex-direction: column;
  background: #cdcdcd;

  button {
    display: flex;
    align-items: center;
    justify-content: center;
    height: 17px;
    background: #fcfcfc;
    border: 1px solid #bbb;
  }

  button:last-child {
    margin-top: auto;
  }
`;

const PopupThumb = styled.div`
  height: 12px;
  margin-top: 21px;
  background: #fcfcfc;
  border: 1px solid #bbb;
`;

const CrsInfo = styled.div`
  padding-top: 6px;
  text-align: center;
  color: #000;

  p {
    margin: 0;
  }
`;

const MoreButton = styled.button`
  display: flex;
  align-items: center;
  justify-content: center;
  border: 1px solid #bbb;
`;

const Annotation = styled.svg`
  position: absolute;
  left: -70px;
  top: -58px;
  pointer-events: none;
`;

const Distance = styled.span`
  width: 53px;
`;

const ScaleLabel = styled.label`
  width: 40px;
  color: #000;
`;

const SelectBox = styled.div`
  display: flex;
  align-items: center;
  width: 96px;
  height: 19px;
  padding-right: 4px;
  background: #fff;
  border: 1px solid #b5b5b5;

  select {
    flex: 1;
    appearance: none;
    padding: 0 2px;
    border: none;
    background: none;
  }
`;

const ZoomButton = styled.button`
  display: flex;
  justify-content: center;
  width: 22px;
`;

const Sign = styled.i`
  width: 9px;
  height: 9px;
  background:
    linear-gradient(#aaa, #aaa) center / 9px 2px no-repeat,
    linear-gradient(#aaa, #aaa) center / ${(p) => (p.$plus ? "2px 9px" : "0 0")} no-repeat;
`;

const Slider = styled.input`
  flex: 1;
  min-width: 40px;
  margin: 0 3px;
  height: 14px;
  appearance: none;
  background: linear-gradient(#aaa, #aaa) center / 100% 1px no-repeat;

  &::-webkit-slider-thumb {
    appearance: none;
    width: 5px;
    height: 14px;
    background: #e5e5e5;
    border: 1px solid #999;
  }
`;

const Grip = styled.svg`
  align-self: flex-end;
  margin: 0 0 3px 3px;
`;
